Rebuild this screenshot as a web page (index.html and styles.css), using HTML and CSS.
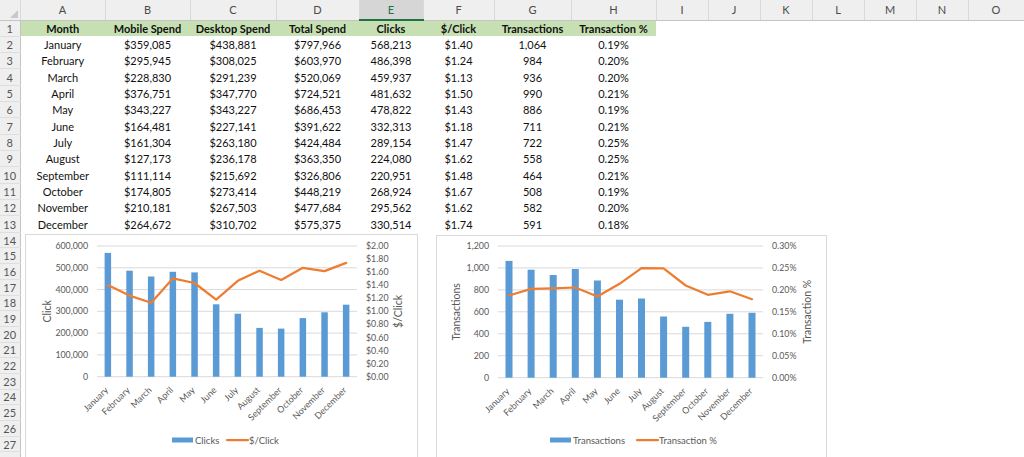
FILE: index.html
```html
<!DOCTYPE html>
<html lang="en">
<head>
    <meta charset="UTF-8" />
    <meta name="viewport" content="width=device-width, initial-scale=1.0" />
    <title>Monthly Spend and Clicks</title>
    <link rel="stylesheet" href="styles.css">
</head>
<body>
    <div class="sheet">
      <table class="grid" id="Tab_Dados">
        <colgroup>
          <col class="w-num" />
          <col class="w-a" />
          <col class="w-b" />
          <col class="w-c" />
          <col class="w-d" />
          <col class="w-e" />
          <col class="w-f" />
          <col class="w-g" />
          <col class="w-h" />
          <col class="w-x" />
          <col class="w-x" />
          <col class="w-x" />
          <col class="w-x" />
          <col class="w-x" />
          <col class="w-x" />
          <col class="w-o" />
        </colgroup>
        <thead>
          <tr class="letters">
            <th class="corner"></th>
            <th>A</th>
            <th>B</th>
            <th>C</th>
            <th>D</th>
            <th class="active">E</th>
            <th>F</th>
            <th>G</th>
            <th>H</th>
            <th>I</th>
            <th>J</th>
            <th>K</th>
            <th>L</th>
            <th>M</th>
            <th>N</th>
            <th>O</th>
          </tr>
        </thead>
        <tbody>
          <tr class="row">
            <th>1</th>
            <td class="head">Month</td>
            <td class="head">Mobile Spend</td>
            <td class="head">Desktop Spend</td>
            <td class="head">Total Spend</td>
            <td class="head">Clicks</td>
            <td class="head">$/Click</td>
            <td class="head">Transactions</td>
            <td class="head">Transaction %</td>
            <td colspan="7"></td>
          </tr>
          <tr class="row data">
            <th>2</th><td>January</td><td>$359,085</td><td>$438,881</td><td>$797,966</td><td>568,213</td><td>$1.40</td><td>1,064</td><td>0.19%</td><td colspan="7"></td>
          </tr>
          <tr class="row data">
            <th>3</th><td>February</td><td>$295,945</td><td>$308,025</td><td>$603,970</td><td>486,398</td><td>$1.24</td><td>984</td><td>0.20%</td><td colspan="7"></td>
          </tr>
          <tr class="row data">
            <th>4</th><td>March</td><td>$228,830</td><td>$291,239</td><td>$520,069</td><td>459,937</td><td>$1.13</td><td>936</td><td>0.20%</td><td colspan="7"></td>
          </tr>
          <tr class="row data">
            <th>5</th><td>April</td><td>$376,751</td><td>$347,770</td><td>$724,521</td><td>481,632</td><td>$1.50</td><td>990</td><td>0.21%</td><td colspan="7"></td>
          </tr>
          <tr class="row data">
            <th>6</th><td>May</td><td>$343,227</td><td>$343,227</td><td>$686,453</td><td>478,822</td><td>$1.43</td><td>886</td><td>0.19%</td><td colspan="7"></td>
          </tr>
          <tr class="row data">
            <th>7</th><td>June</td><td>$164,481</td><td>$227,141</td><td>$391,622</td><td>332,313</td><td>$1.18</td><td>711</td><td>0.21%</td><td colspan="7"></td>
          </tr>
          <tr class="row data">
            <th>8</th><td>July</td><td>$161,304</td><td>$263,180</td><td>$424,484</td><td>289,154</td><td>$1.47</td><td>722</td><td>0.25%</td><td colspan="7"></td>
          </tr>
          <tr class="row data">
            <th>9</th><td>August</td><td>$127,173</td><td>$236,178</td><td>$363,350</td><td>224,080</td><td>$1.62</td><td>558</td><td>0.25%</td><td colspan="7"></td>
          </tr>
          <tr class="row data">
            <th>10</th><td>September</td><td>$111,114</td><td>$215,692</td><td>$326,806</td><td>220,951</td><td>$1.48</td><td>464</td><td>0.21%</td><td colspan="7"></td>
          </tr>
          <tr class="row data">
            <th>11</th><td>October</td><td>$174,805</td><td>$273,414</td><td>$448,219</td><td>268,924</td><td>$1.67</td><td>508</td><td>0.19%</td><td colspan="7"></td>
          </tr>
          <tr class="row data">
            <th>12</th><td>November</td><td>$210,181</td><td>$267,503</td><td>$477,684</td><td>295,562</td><td>$1.62</td><td>582</td><td>0.20%</td><td colspan="7"></td>
          </tr>
          <tr class="row data">
            <th>13</th><td>December</td><td>$264,672</td><td>$310,702</td><td>$575,375</td><td>330,514</td><td>$1.74</td><td>591</td><td>0.18%</td><td colspan="7"></td>
          </tr>
          <tr class="row short"><th>14</th><td colspan="15"></td></tr>
          <tr class="row short"><th>15</th><td colspan="15"></td></tr>
          <tr class="row short"><th>16</th><td colspan="15"></td></tr>
          <tr class="row short"><th>17</th><td colspan="15"></td></tr>
          <tr class="row short"><th>18</th><td colspan="15"></td></tr>
          <tr class="row short"><th>19</th><td colspan="15"></td></tr>
          <tr class="row short"><th>20</th><td colspan="15"></td></tr>
          <tr class="row short"><th>21</th><td colspan="15"></td></tr>
          <tr class="row short"><th>22</th><td colspan="15"></td></tr>
          <tr class="row short"><th>23</th><td colspan="15"></td></tr>
          <tr class="row short"><th>24</th><td colspan="15"></td></tr>
          <tr class="row short"><th>25</th><td colspan="15"></td></tr>
          <tr class="row short"><th>26</th><td colspan="15"></td></tr>
          <tr class="row short"><th>27</th><td colspan="15"></td></tr>
          <tr class="row short"><th></th><td colspan="15"></td></tr>
        </tbody>
      </table>

      <div class="chart chart-clicks" id="chartClicks"></div>
      <div class="chart chart-trans" id="chartTrans"></div>
    </div>

    <script>
      // le os valores da tabela
      let rows = document.querySelectorAll("#Tab_Dados tr.data");
      let months = [],
        clicks = [],
        perClick = [],
        trans = [],
        transPct = [];

      function num(txt) {
        return parseFloat(txt.replace(/[$,%]/g, ""));
      }

      for (let i = 0; i < rows.length; i++) {
        let c = rows[i].cells;
        let total = num(c[4].innerText);
        let cl = num(c[5].innerText);
        let t = num(c[7].innerText);
        months.push(c[1].innerText);
        clicks.push(cl);
        perClick.push(total / cl);
        trans.push(t);
        transPct.push((t / cl) * 100);
      }

      function drawChart(el, cfg) {
        let n = cfg.bars.length;
        let step = (cfg.right - cfg.left) / n;
        let h = cfg.bottom - cfg.top;
        let s = "";

        // grade e eixo principal
        for (let i = 0; i <= cfg.ticks; i++) {
          let y = (cfg.bottom - (h * i) / cfg.ticks).toFixed(1);
          s += '<line class="gridline" x1="' + cfg.left + '" x2="' + cfg.right + '" y1="' + y + '" y2="' + y + '"/>';
          s += '<text class="tick" text-anchor="end" x="' + (cfg.left - 9) + '" y="' + (+y + 3) + '">' +
            cfg.leftFmt((cfg.leftMax * i) / cfg.ticks) + "</text>";
        }

        // eixo secundario
        for (let i = 0; i <= cfg.rightTicks; i++) {
          let y = cfg.bottom - (h * i) / cfg.rightTicks;
          s += '<text class="tick" x="' + (cfg.right + 9) + '" y="' + (y + 3).toFixed(1) + '">' +
            cfg.rightFmt((cfg.rightMax * i) / cfg.rightTicks) + "</text>";
        }

        for (let i = 0; i < n; i++) {
          let bh = (h * cfg.bars[i]) / cfg.leftMax;
          let x = cfg.left + step * (i + 0.5) - cfg.barW / 2;
          s += '<rect class="bar" x="' + x.toFixed(1) + '" y="' + (cfg.bottom - bh).toFixed(1) +
            '" width="' + cfg.barW + '" height="' + bh.toFixed(1) + '"/>';
        }

        let pts = cfg.line.map(function (v, i) {
          return (cfg.left + step * (i + 0.5)).toFixed(1) + "," + (cfg.bottom - (h * v) / cfg.rightMax).toFixed(1);
        });
        s += '<polyline class="serie" points="' + pts.join(" ") + '"/>';

        for (let i = 0; i < n; i++) {
          let x = (cfg.left + step * (i + 0.5) + 1).toFixed(1);
          let y = (cfg.bottom + 14).toFixed(1);
          s += '<text class="cat" text-anchor="end" x="' + x + '" y="' + y +
            '" transform="rotate(-45 ' + x + " " + y + ')">' + months[i] + "</text>";
        }

        let mid = (cfg.top + cfg.bottom) / 2;
        s += '<text class="axis-title" text-anchor="middle" dy="0.35em" transform="translate(' + cfg.leftTitleX + " " + mid +
          ') rotate(-90)">' + cfg.leftTitle + "</text>";
        s += '<text class="axis-title" text-anchor="middle" dy="0.35em" transform="translate(' + cfg.rightTitleX + " " + mid +
          ') rotate(-90)">' + cfg.rightTitle + "</text>";

        // legenda
        let ly = cfg.legendY;
        s += '<rect class="bar" x="' + cfg.legendBarX + '" y="' + (ly - 2.5) + '" width="21" height="5"/>';
        s += '<text class="legend" x="' + (cfg.legendBarX + 23) + '" y="' + (ly + 3.5) + '">' + cfg.barName + "</text>";
        s += '<line class="serie" x1="' + cfg.legendLineX + '" x2="' + (cfg.legendLineX + 21) + '" y1="' + ly + '" y2="' + ly + '"/>';
        s += '<text class="legend" x="' + (cfg.legendLineX + 22) + '" y="' + (ly + 3.5) + '">' + cfg.lineName + "</text>";

        el.innerHTML = '<svg xmlns="http://www.w3.org/2000/svg">' + s + "</svg>";
      }

      drawChart(document.getElementById("chartClicks"), {
        left: 71, right: 331, top: 11, bottom: 141.7, ticks: 6, rightTicks: 10,
        bars: clicks, leftMax: 600000, barW: 6.5,
        line: perClick, rightMax: 2,
        leftFmt: function (v) { return v.toLocaleString("en-US"); },
        rightFmt: function (v) { return "$" + v.toFixed(2); },
        leftTitle: "Click", leftTitleX: 21,
        rightTitle: "$/Click", rightTitleX: 372,
        legendY: 205, legendBarX: 146, barName: "Clicks",
        legendLineX: 201, lineName: "$/Click"
      });

      drawChart(document.getElementById("chartTrans"), {
        left: 61, right: 326, top: 10, bottom: 141.7, ticks: 6, rightTicks: 6,
        bars: trans, leftMax: 1200, barW: 7,
        line: transPct, rightMax: 0.3,
        leftFmt: function (v) { return v.toLocaleString("en-US"); },
        rightFmt: function (v) { return v.toFixed(2) + "%"; },
        leftTitle: "Transactions", leftTitleX: 19,
        rightTitle: "Transaction %", rightTitleX: 370,
        legendY: 204, legendBarX: 113, barName: "Transactions",
        legendLineX: 200, lineName: "Transaction %"
      });
    </script>
</body>
</html>
```

FILE: styles.css
```css
body {
    margin: 0;
    background-color: #ffffff;
    font-family: "Lato", "Open Sans", sans-serif;
}

.sheet {
    position: relative;
    width: 1024px;
    height: 457px;
    overflow: hidden;
}

.grid {
    width: 1024px;
    border-collapse: collapse;
    table-layout: fixed;
}

.w-num { width: 20px; }
.w-a { width: 85px; }
.w-b { width: 85px; }
.w-c { width: 86px; }
.w-d { width: 83px; }
.w-e { width: 64px; }
.w-f { width: 71px; }
.w-g { width: 77px; }
.w-h { width: 85px; }
.w-x { width: 52px; }
.w-o { width: 56px; }

.letters th {
    height: 19px;
    padding: 0;
    background-color: #efefef;
    color: #4a4a4a;
    font-size: 11px;
    font-weight: normal;
    border-right: 1px solid #d9d9d9;
    border-bottom: 1px solid #c4c4c4;
}

.letters th.active {
    background-color: #d6d6d6;
    color: #217346;
    border-bottom: 2px solid #217346;
}

.letters th.corner {
    position: relative;
}

.letters th.corner::after {
    content: "";
    position: absolute;
    right: 2px;
    bottom: 2px;
    border-left: 8px solid transparent;
    border-bottom: 8px solid #c8c8c8;
}

.row {
    height: 16.33px;
}

.row.short {
    height: 15.7px;
}

.row th {
    padding: 0;
    background-color: #efefef;
    color: #555555;
    font-size: 11px;
    font-weight: normal;
    text-align: center;
    border-right: 1px solid #c4c4c4;
    border-bottom: 1px solid #dedede;
}

.row td {
    padding: 0;
    color: #111111;
    font-size: 11px;
    text-align: center;
    white-space: nowrap;
    overflow: hidden;
}

.row td.head {
    background-color: #c6e0b4;
    font-weight: bold;
}

.chart {
    position: absolute;
    height: 240px;
    background-color: #ffffff;
    border: 1px solid #d9d9d9;
}

.chart-clicks {
    left: 25px;
    top: 234px;
    width: 391px;
}

.chart-trans {
    left: 436px;
    top: 235px;
    width: 389px;
}

.chart svg {
    display: block;
    width: 100%;
    height: 100%;
}

.gridline {
    stroke: #d9d9d9;
    stroke-width: 1;
}

.bar {
    fill: #5b9bd5;
}

.serie {
    fill: none;
    stroke: #ed7d31;
    stroke-width: 2.25;
    stroke-linejoin: round;
    stroke-linecap: round;
}

.tick,
.cat,
.legend,
.axis-title {
    font-family: "Lato", "Open Sans", sans-serif;
    fill: #595959;
}

.tick {
    font-size: 8.8px;
}

.cat {
    font-size: 9px;
}

.legend {
    font-size: 9.5px;
}

.axis-title {
    font-size: 10.5px;
}
```
